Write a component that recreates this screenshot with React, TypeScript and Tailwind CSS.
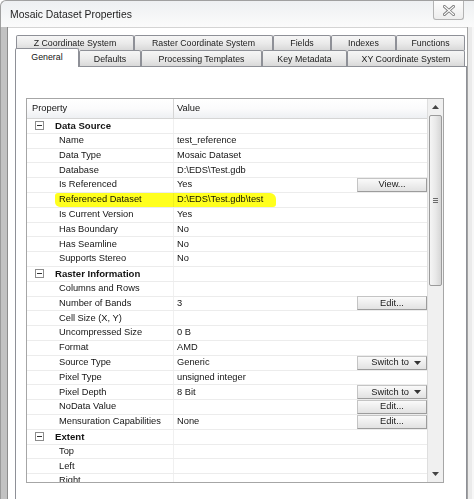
import React from "react";

type Row = { g?: string; l?: string; v?: string; btn?: "view" | "edit" | "switch"; hl?: boolean };

const rows: Row[] = [
  { g: "Data Source" },
  { l: "Name", v: "test_reference" },
  { l: "Data Type", v: "Mosaic Dataset" },
  { l: "Database", v: "D:\\EDS\\Test.gdb" },
  { l: "Is Referenced", v: "Yes", btn: "view" },
  { l: "Referenced Dataset", v: "D:\\EDS\\Test.gdb\\test", hl: true },
  { l: "Is Current Version", v: "Yes" },
  { l: "Has Boundary", v: "No" },
  { l: "Has Seamline", v: "No" },
  { l: "Supports Stereo", v: "No" },
  { g: "Raster Information" },
  { l: "Columns and Rows", v: "" },
  { l: "Number of Bands", v: "3", btn: "edit" },
  { l: "Cell Size (X, Y)", v: "" },
  { l: "Uncompressed Size", v: "0 B" },
  { l: "Format", v: "AMD" },
  { l: "Source Type", v: "Generic", btn: "switch" },
  { l: "Pixel Type", v: "unsigned integer" },
  { l: "Pixel Depth", v: "8 Bit", btn: "switch" },
  { l: "NoData Value", v: "", btn: "edit" },
  { l: "Mensuration Capabilities", v: "None", btn: "edit" },
  { g: "Extent" },
  { l: "Top", v: "" },
  { l: "Left", v: "" },
  { l: "Right", v: "" },
];

function Tab({ label, w }: { label: string; w: string }) {
  return (
    <div
      className={`${w} h-full shrink-0 border border-b-0 border-[#8e9097] rounded-t-[2px] bg-gradient-to-b from-[#f6f6f6] via-[#ebebeb] to-[#d9d9d9] flex items-center justify-center text-[8.8px] text-[#1a1a1a] leading-none pt-[1px]`}
    >
      {label}
    </div>
  );
}

function Btn({ kind }: { kind: "view" | "edit" | "switch" }) {
  return (
    <div className="w-[70px] h-[14px] shrink-0 border border-[#c4c4c4] border-r-[#9c9c9c] border-b-[#9c9c9c] bg-gradient-to-b from-[#fafafa] to-[#e2e2e2] flex items-center text-[9.3px] text-[#1a1a1a] leading-none">
      {kind === "switch" ? (
        <div className="flex-1 flex items-center justify-end pr-[5px] gap-[5px]">
          <span>Switch to</span>
          <svg width="7" height="4" viewBox="0 0 7 4">
            <path d="M0 0 L7 0 L3.5 4 Z" fill="#333" />
          </svg>
        </div>
      ) : (
        <div className="flex-1 text-center">{kind === "view" ? "View..." : "Edit..."}</div>
      )}
    </div>
  );
}

function MinusBox() {
  return (
    <div className="w-[9px] h-[9px] border border-[#8c8c8c] bg-white flex items-center justify-center shrink-0">
      <div className="w-[5px] h-[1px] bg-[#333]" />
    </div>
  );
}

export default function App() {
  return (
    <div className="w-[474px] h-[499px] overflow-hidden flex flex-col bg-white font-['Liberation_Sans',Arial,sans-serif] text-[#141414]">
      {/* Title bar */}
      <div className="h-[27px] shrink-0 flex items-start border-t border-l border-[#a0a0a0] rounded-tl-[6px] bg-gradient-to-b from-[#eef0f2] to-[#fbfbfb]">
        <div className="pl-[9px] pt-[9px] text-[10.4px] leading-none text-[#1e1e1e]">Mosaic Dataset Properties</div>
        <div className="ml-auto mr-[10px] w-[31px] h-[19px] border border-t-0 border-[#b3b3b3] rounded-b-[3px] bg-gradient-to-b from-[#fdfdfd] to-[#ededed] flex items-center justify-center">
          <svg width="12" height="11" viewBox="0 0 12 11">
            <path d="M1.5 1.5 L10.5 9.5 M10.5 1.5 L1.5 9.5" stroke="#7a7a7a" strokeWidth="3" strokeLinecap="square" />
            <path d="M1.5 1.5 L10.5 9.5 M10.5 1.5 L1.5 9.5" stroke="#ffffff" strokeWidth="1.2" strokeLinecap="square" />
          </svg>
        </div>
      </div>

      <div className="flex-1 flex min-h-0">
        {/* Left frame */}
        <div className="w-[8px] shrink-0 bg-[#c2c2c2] border-l border-l-[#9a9a9a] border-r border-r-[#8c8c8c]" />

        {/* Client area */}
        <div className="flex-1 flex flex-col min-w-0 bg-white border-t border-[#d4d4d4]">
          <div className="pt-[7px]">
            {/* Row 1 tabs */}
            <div className="flex h-[15px] ml-[8px]">
              <Tab label="Z Coordinate System" w="w-[118px]" />
              <Tab label="Raster Coordinate System" w="w-[139px]" />
              <Tab label="Fields" w="w-[58px]" />
              <Tab label="Indexes" w="w-[65px]" />
              <Tab label="Functions" w="w-[69px]" />
            </div>
            {/* Row 2 tabs */}
            <div className="flex h-[16px] ml-[7px] items-start">
              <div className="relative z-10 w-[64px] h-[19px] -mt-[2px] shrink-0 border border-b-0 border-[#8e9097] rounded-t-[2px] bg-white flex items-start justify-center pt-[4px] text-[8.8px] leading-none">
                General
              </div>
              <div className="flex h-[16px]">
                <Tab label="Defaults" w="w-[62px]" />
                <Tab label="Processing Templates" w="w-[121px]" />
                <Tab label="Key Metadata" w="w-[85px]" />
                <Tab label="XY Coordinate System" w="w-[118px]" />
              </div>
            </div>
          </div>

          {/* Tab page */}
          <div className="flex-1 ml-[7px] w-[452px] border border-b-0 border-[#8e9097] bg-white">
            <div className="mt-[31px] ml-[10px] w-[418px] h-[385px] border border-[#a6a6a6] flex overflow-hidden">
              {/* List */}
              <div className="w-[400px] h-full overflow-hidden flex flex-col text-[9.3px] leading-none">
                {/* Header */}
                <div className="h-[20px] shrink-0 flex border-b border-[#d5d5d5] bg-gradient-to-b from-[#ffffff] via-[#fbfbfc] to-[#eef0f3]">
                  <div className="w-[147px] shrink-0 border-r border-[#d5d5d5] flex items-center pl-[5px]">Property</div>
                  <div className="flex-1 flex items-center pl-[3px]">Value</div>
                </div>
                {rows.map((r, i) => (
                  <div key={i} className="relative h-[14.8px] shrink-0 flex border-b border-[#ececec]">
                    {r.g ? (
                      <>
                        <div className="w-[147px] shrink-0 border-r border-[#f0f0f0] flex items-center pl-[8px]">
                          <MinusBox />
                          <span className="ml-[11px] font-bold text-[9.6px]">{r.g}</span>
                        </div>
                        <div className="flex-1" />
                      </>
                    ) : (
                      <>
                        <div className="w-[147px] shrink-0 border-r border-[#f0f0f0] flex items-center pl-[32px] whitespace-nowrap">
                          {r.l}
                        </div>
                        <div className="flex-1 flex items-center justify-between pl-[3px] whitespace-nowrap">
                          <span>{r.v}</span>
                          {r.btn && <Btn kind={r.btn} />}
                        </div>
                      </>
                    )}
                    {r.hl && (
                      <div className="absolute left-[28px] top-[0px] w-[221px] h-[14px] bg-[#ffff1e] mix-blend-multiply rounded-[3px] rounded-tr-[6px] rounded-bl-[5px]" />
                    )}
                  </div>
                ))}
              </div>
              {/* Scrollbar */}
              <div className="w-[16px] h-full shrink-0 flex flex-col bg-[#f0f0f0] border-l border-[#dedede]">
                <div className="h-[16px] shrink-0 flex items-center justify-center">
                  <svg width="7" height="4" viewBox="0 0 7 4">
                    <path d="M0 4 L7 4 L3.5 0 Z" fill="#444" />
                  </svg>
                </div>
                <div className="ml-[1px] w-[13px] h-[171px] shrink-0 border border-[#9b9b9b] rounded-[2px] bg-gradient-to-r from-[#f5f5f5] via-[#e9e9e9] to-[#d6d6d6] flex flex-col items-center justify-center gap-[1px]">
                  <div className="w-[5px] h-[1px] bg-[#6b6b6b]" />
                  <div className="w-[5px] h-[1px] bg-[#6b6b6b]" />
                  <div className="w-[5px] h-[1px] bg-[#6b6b6b]" />
                </div>
                <div className="flex-1" />
                <div className="h-[16px] shrink-0 flex items-center justify-center">
                  <svg width="7" height="4" viewBox="0 0 7 4">
                    <path d="M0 0 L7 0 L3.5 4 Z" fill="#444" />
                  </svg>
                </div>
              </div>
            </div>
          </div>
        </div>

        {/* Right frame */}
        <div className="w-[7px] shrink-0 bg-[#ebebeb] border-l border-l-[#a3a3a3] border-r-2 border-r-[#f7f7f7]" />
      </div>
    </div>
  );
}
